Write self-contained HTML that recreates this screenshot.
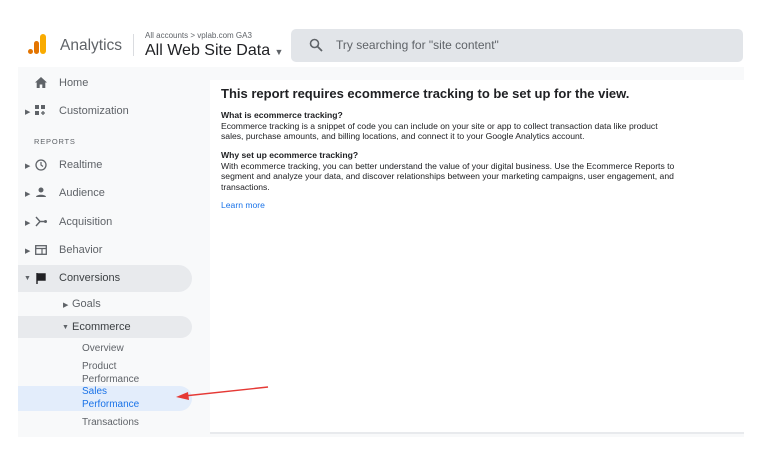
<!DOCTYPE html>
<html><head><style>
*{margin:0;padding:0;box-sizing:border-box}
body{width:768px;height:454px;background:#fff;font-family:"Liberation Sans",Arial,sans-serif;position:relative;overflow:hidden;color:#202124}
.a{position:absolute}
.grey{left:18px;top:67px;width:726px;height:370px;background:#f8f9fa}
.panel{left:210px;top:80px;width:534px;height:354px;background:#fff;border-bottom:2px solid #e8eaed}
.nav{font-size:11px;color:#5f6368;white-space:nowrap}
.tri{font-size:7px;color:#5f6368}
.pill{left:18px;width:174px;background:#e8eaed;border-radius:0 14px 14px 0}
.ct{font-size:8.6px;line-height:10.6px;color:#202124;white-space:nowrap}
</style></head><body>
<div class="a grey"></div>
<div class="a panel"></div>
<div class="a" style="left:28px;top:49px;width:5px;height:5px;border-radius:50%;background:#e37400"></div>
<div class="a" style="left:34px;top:41px;width:5px;height:13px;border-radius:2.5px;background:#e37400"></div>
<div class="a" style="left:40px;top:34px;width:6px;height:20px;border-radius:3px;background:#f9ab00"></div>
<div class="a" style="left:60px;top:37px;font-size:15.5px;color:#5f6368">Analytics</div>
<div class="a" style="left:133px;top:34px;width:1px;height:22px;background:#dadce0"></div>
<div class="a" style="left:145px;top:31px;font-size:8px;color:#5f6368">All accounts &gt; vplab.com GA3</div>
<div class="a" style="left:145px;top:42px;font-size:16px;color:#202124">All Web Site Data <span style="font-size:9px;color:#5f6368">▼</span></div>
<div class="a" style="left:291px;top:29px;width:452px;height:33px;background:#e2e5e9;border-radius:5px"></div>
<svg class="a" style="left:309px;top:38px" width="14" height="14" viewBox="0 0 14 14"><circle cx="5.5" cy="5.5" r="4" fill="none" stroke="#5f6368" stroke-width="1.6"/><path d="M8.5 8.5L13 13" stroke="#5f6368" stroke-width="1.8"/></svg>
<div class="a" style="left:336px;top:38px;font-size:12px;color:#5f6368">Try searching for "site content"</div>

<div class="a pill" style="top:265px;height:27px"></div>
<div class="a pill" style="top:316px;height:22px"></div>
<div class="a pill" style="top:386px;height:25px;background:#e3edfb"></div>

<svg class="a" style="left:35px;top:77px" width="12" height="11"><path d="M6 0L0 5.5h1.7V11h3V7.5h2.6V11h3V5.5H12z" fill="#5f6368"/></svg>
<div class="a nav" style="left:59px;top:77px">Home</div>
<div class="a tri" style="left:25px;top:108px">▶</div>
<svg class="a" style="left:35px;top:105px" width="11" height="11"><rect x="0" y="0" width="4" height="4" fill="#5f6368"/><rect x="6" y="0" width="4" height="4" fill="#5f6368"/><rect x="0" y="6" width="4" height="4" fill="#5f6368"/><path d="M8 6v4M6 8h4" stroke="#5f6368" stroke-width="1.3"/></svg>
<div class="a nav" style="left:59px;top:105px">Customization</div>
<div class="a" style="left:34px;top:137px;font-size:7.5px;color:#5f6368;letter-spacing:.8px">REPORTS</div>
<div class="a tri" style="left:25px;top:162px">▶</div>
<svg class="a" style="left:35px;top:159px" width="12" height="12"><circle cx="6" cy="6" r="5" fill="none" stroke="#5f6368" stroke-width="1.3"/><path d="M6 3v3l2 1.5" stroke="#5f6368" stroke-width="1.2" fill="none"/></svg>
<div class="a nav" style="left:59px;top:159px">Realtime</div>
<div class="a tri" style="left:25px;top:190px">▶</div>
<svg class="a" style="left:36px;top:187px" width="10" height="11"><circle cx="5" cy="3" r="2.5" fill="#5f6368"/><path d="M0 10c0-3 10-3 10 0z" fill="#5f6368"/></svg>
<div class="a nav" style="left:59px;top:187px">Audience</div>
<div class="a tri" style="left:25px;top:219px">▶</div>
<svg class="a" style="left:35px;top:216px" width="12" height="11"><path d="M1 1l4 4.5L1 10M5 5.5h6" stroke="#5f6368" stroke-width="1.4" fill="none"/><circle cx="10.5" cy="5.5" r="1.5" fill="#5f6368"/></svg>
<div class="a nav" style="left:59px;top:216px">Acquisition</div>
<div class="a tri" style="left:25px;top:247px">▶</div>
<svg class="a" style="left:35px;top:245px" width="12" height="10"><rect x=".7" y=".7" width="10.6" height="8.6" fill="none" stroke="#5f6368" stroke-width="1.3"/><path d="M1 3.5h10M7 3.5v6" stroke="#5f6368" stroke-width="1.2"/></svg>
<div class="a nav" style="left:59px;top:244px">Behavior</div>
<div class="a tri" style="left:24px;top:275px">▼</div>
<svg class="a" style="left:36px;top:273px" width="10" height="11"><path d="M1 0v11M1 1h8v6H1" stroke="#202124" stroke-width="1.4" fill="#202124"/></svg>
<div class="a nav" style="left:59px;top:272px;color:#3c4043">Conversions</div>
<div class="a tri" style="left:63px;top:301px">▶</div>
<div class="a nav" style="left:72px;top:298px">Goals</div>
<div class="a tri" style="left:62px;top:324px">▼</div>
<div class="a nav" style="left:72px;top:321px;color:#3c4043">Ecommerce</div>
<div class="a nav" style="left:82px;top:343px;font-size:10px">Overview</div>
<div class="a nav" style="left:82px;top:361px;font-size:10px;line-height:12.7px">Product<br>Performance</div>
<div class="a nav" style="left:82px;top:386px;font-size:10px;line-height:12.7px;color:#1a73e8">Sales<br>Performance</div>
<div class="a nav" style="left:82px;top:417px;font-size:10px">Transactions</div>

<svg class="a" style="left:170px;top:383px" width="102" height="20"><path d="M98 4L14 13" stroke="#e53935" stroke-width="1.4"/><path d="M6 14l12-5 1 8z" fill="#e53935"/></svg>

<div class="a" style="left:221px;top:86px;font-size:13px;font-weight:bold;color:#202124">This report requires ecommerce tracking to be set up for the view.</div>
<div class="a ct" style="left:221px;top:110px"><b>What is ecommerce tracking?</b><br>Ecommerce tracking is a snippet of code you can include on your site or app to collect transaction data like product<br>sales, purchase amounts, and billing locations, and connect it to your Google Analytics account.</div>
<div class="a ct" style="left:221px;top:150px"><b>Why set up ecommerce tracking?</b><br>With ecommerce tracking, you can better understand the value of your digital business. Use the Ecommerce Reports to<br>segment and analyze your data, and discover relationships between your marketing campaigns, user engagement, and<br>transactions.</div>
<div class="a" style="left:221px;top:200px;font-size:8.6px;color:#1a73e8">Learn more</div>
</body></html>
